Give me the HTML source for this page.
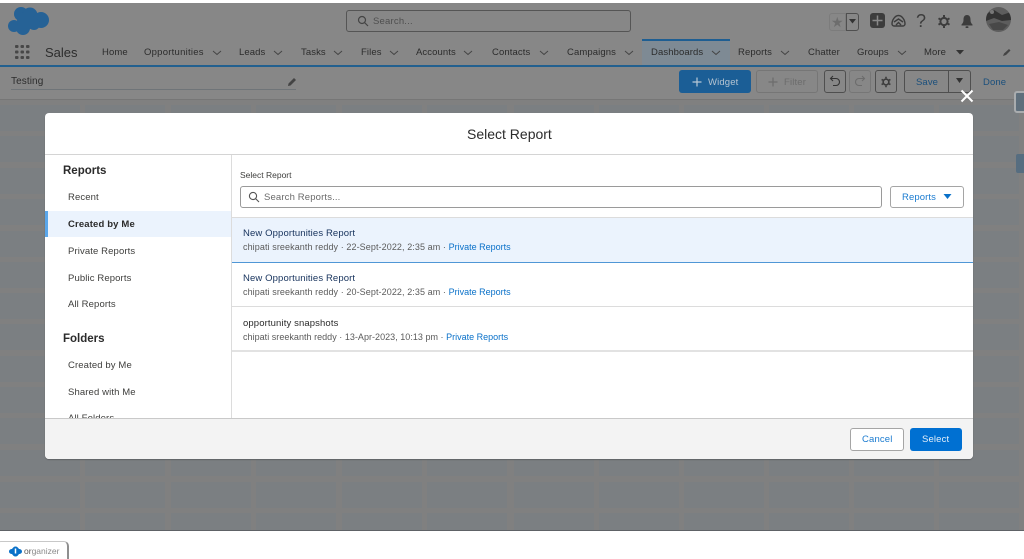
<!DOCTYPE html>
<html><head><meta charset="utf-8"><style>
html,body{margin:0;padding:0}
body{width:1024px;height:559px;overflow:hidden;position:relative;background:#fff;font-family:"Liberation Sans",sans-serif}
#w{position:absolute;left:0;top:0;width:1024px;height:559px;overflow:hidden}
.a{position:absolute;white-space:nowrap;line-height:12px}
.n{font-size:9.5px;color:#2c2c2c;top:47px;letter-spacing:.1px}
.c{position:absolute;background:#7b7f82;width:80px}
.b{position:absolute;box-sizing:border-box;border:1px solid #4f4f4f;border-radius:3px}
.l{font-size:9.5px;color:#3e3e3c;left:68px;letter-spacing:.12px}
.t{font-size:9.5px;color:#16325c;left:243px;letter-spacing:.12px}
.s{font-size:9px;left:243px;color:#5b5b5b;letter-spacing:.09px}
.s b{font-weight:normal;color:#0a71c9;letter-spacing:0}
</style></head><body><div id="w">
<div class="a" style="left:0;top:0;width:1024px;height:3px;background:#fff"></div>
<div class="a" style="left:0;top:3px;width:1024px;height:527px;background:#808080"></div>
<div class="a" style="left:0;top:3px;width:1024px;height:96px;background:#878787"></div>
<div class="a" style="left:0;top:99px;width:1024px;height:1px;background:#767676"></div>
<div id="g"><script>
var x=[0,85,171,256,342,427,514,599,684,769,854,939],y=[105,136,168,199,231,262,293,324,356,387,418,450,482,513],h='';
for(var i=0;i<x.length;i++)for(var j=0;j<y.length;j++){var H=j==y.length-1?17:26;h+='<div class="c" style="left:'+x[i]+'px;top:'+y[j]+'px;height:'+H+'px"></div>';}
document.write(h);
</script></div>
<div class="a" style="left:1019px;top:105px;width:5px;height:425px;background:#808080"></div>
<div class="a" style="left:0;top:530px;width:1024px;height:1px;background:#5e6266"></div>

<svg class="a" style="left:8px;top:6px" width="42" height="30" viewBox="0 0 42 30"><g fill="#266296"><circle cx="6" cy="20" r="6"/><circle cx="13" cy="8" r="7"/><circle cx="22" cy="9" r="7.500"/><circle cx="33" cy="14" r="8"/><circle cx="26" cy="18" r="6"/><circle cx="15" cy="22" r="7"/><circle cx="18" cy="15" r="9"/></g></svg>
<div class="a" style="left:346px;top:10px;width:285px;height:22px;box-sizing:border-box;border:1px solid #555;border-radius:3px"></div>
<svg class="a" style="left:357px;top:15px" width="12" height="12" viewBox="0 0 12 12" fill="none" stroke="#444" stroke-width="1.200"><circle cx="5" cy="5" r="3.500"/><path d="M7.500 7.500L11 11"/></svg>
<div class="a" style="left:373px;top:16px;font-size:9.5px;color:#4f4f4f;letter-spacing:.2px">Search...</div>

<div class="a" style="left:829px;top:13px;width:17px;height:18px;box-sizing:border-box;border:1px solid #7c7c7c;border-radius:3px 0 0 3px"></div>
<div class="a" style="left:846px;top:13px;width:13px;height:18px;box-sizing:border-box;border:1px solid #4f4f4f;border-radius:0 3px 3px 0"></div>
<div class="a" style="left:831px;top:14px;font-size:14px;line-height:16px;color:#6d6d6d">★</div>
<svg class="a" style="left:849px;top:19px" width="7" height="5"><path d="M0 0H7L3.500 4.500Z" fill="#333"/></svg>
<svg class="a" style="left:870px;top:13px" width="15" height="15"><rect width="15" height="15" rx="3" fill="#3c3c3c"/><path d="M7.500 2.500V12.500M2.500 7.500H12.500" stroke="#888" stroke-width="1.500"/></svg>
<svg class="a" style="left:891px;top:14px" width="15" height="14" viewBox="0 0 15 14" fill="none" stroke="#3c3c3c" stroke-width="1.400"><path d="M1 10C1 6 4 1.500 7.500 1.500S14 6 14 10C14 11 13 12 12 12H3C2 12 1 11 1 10Z"/><path d="M3 8L7.500 5L12 8M5 11L7.500 8.500L10 11"/></svg>
<div class="a" style="left:916px;top:12px;font-size:18px;line-height:18px;color:#3c3c3c">?</div>
<svg class="a" style="left:937px;top:14px" width="14" height="15" viewBox="0 0 14 15" fill="none" stroke="#3c3c3c"><circle cx="7" cy="7.500" r="3.600" stroke-width="2"/><path d="M7 1V3M7 12V14M1.500 4.300L3.200 5.300M10.800 9.700L12.500 10.700M1.500 10.700L3.200 9.700M10.800 5.300L12.500 4.300" stroke-width="2"/></svg>
<svg class="a" style="left:960px;top:14px" width="14" height="15" viewBox="0 0 14 15"><path d="M7 1C4.500 1 3.500 3 3.500 5.500C3.500 8 3 9 1.500 10.500V11.500H12.500V10.500C11 9 10.500 8 10.500 5.500C10.500 3 9.500 1 7 1Z" fill="#3c3c3c"/><rect x="5.500" y="12.300" width="3" height="1.700" rx=".8" fill="#3c3c3c"/></svg>
<svg class="a" style="left:986px;top:7px" width="25" height="25"><defs><clipPath id="av"><circle cx="12.500" cy="12.500" r="12.500"/></clipPath></defs><g clip-path="url(#av)"><rect width="25" height="25" fill="#5d5d5d"/><path d="M0 7L8 3L16 8L25 5V13L16 14L8 11L0 14Z" fill="#333"/><path d="M3 17L13 15L22 18L17 23H7Z" fill="#484848"/><circle cx="6" cy="5" r="2" fill="#777"/></g></svg>

<svg class="a" style="left:14px;top:44px" width="17" height="16" fill="#474747"><rect x="1" y="1" width="3.500" height="3" rx="1"/><rect x="6.500" y="1" width="3.500" height="3" rx="1"/><rect x="12" y="1" width="3.500" height="3" rx="1"/><rect x="1" y="6.500" width="3.500" height="3" rx="1"/><rect x="6.500" y="6.500" width="3.500" height="3" rx="1"/><rect x="12" y="6.500" width="3.500" height="3" rx="1"/><rect x="1" y="12" width="3.500" height="3" rx="1"/><rect x="6.500" y="12" width="3.500" height="3" rx="1"/><rect x="12" y="12" width="3.500" height="3" rx="1"/></svg>
<div class="a" style="left:45px;top:45px;font-size:13px;line-height:15px;color:#2d2d2d">Sales</div>
<div class="a" style="left:642px;top:39px;width:88px;height:26px;background:#7e8a94"></div>
<div class="a" style="left:642px;top:39px;width:88px;height:2px;background:#1e5e92"></div>
<div class="a" style="left:0;top:65px;width:1024px;height:2px;background:#22608f"></div>
<div class="a n" style="left:102px">Home</div>
<div class="a n" style="left:144px;letter-spacing:.25px">Opportunities</div>
<div class="a n" style="left:239px">Leads</div>
<div class="a n" style="left:301px">Tasks</div>
<div class="a n" style="left:361px">Files</div>
<div class="a n" style="left:416px">Accounts</div>
<div class="a n" style="left:492px">Contacts</div>
<div class="a n" style="left:567px">Campaigns</div>
<div class="a n" style="left:651px">Dashboards</div>
<div class="a n" style="left:738px">Reports</div>
<div class="a n" style="left:808px">Chatter</div>
<div class="a n" style="left:857px">Groups</div>
<div class="a n" style="left:924px">More</div>
<svg class="a" style="left:0;top:48px" width="1024" height="10" fill="none" stroke="#444" stroke-width="1"><path d="M213 3L217 6.500L221 3M274 3L278 6.500L282 3M334 3L338 6.500L342 3M390 3L394 6.500L398 3M464 3L468 6.500L472 3M540 3L544 6.500L548 3M625 3L629 6.500L633 3M712 3L716 6.500L720 3M781 3L785 6.500L789 3M898 3L902 6.500L906 3"/><path d="M956 2H964L960 6.500Z" fill="#333" stroke="none"/><path d="M1003 8L1004 5.500L1009 1L1010.500 2.500L1006 7Z" fill="#444" stroke="none"/></svg>

<div class="a" style="left:11px;top:76px;font-size:10px;color:#2d2d2d;letter-spacing:.1px">Testing</div>
<div class="a" style="left:11px;top:89px;width:285px;height:1px;background:#6f7478"></div>
<svg class="a" style="left:287px;top:77px" width="10" height="10"><path d="M1 9L1.500 6.500L7 1L9 3L3.500 8.500Z" fill="#444"/></svg>

<div class="a" style="left:679px;top:70px;width:72px;height:23px;background:#1b5e96;border-radius:3px"></div>
<svg class="a" style="left:692px;top:77px" width="10" height="10"><path d="M5 .5V9.500M.5 5H9.500" stroke="#b8c8d6" stroke-width="1.200"/></svg>
<div class="a" style="left:708px;top:77px;font-size:9.500px;color:#b5c4d1;letter-spacing:.15px">Widget</div>
<div class="b" style="left:756px;top:70px;width:62px;height:23px;border-color:#767676"></div>
<svg class="a" style="left:768px;top:77px" width="10" height="10"><path d="M5 .5V9.500M.5 5H9.500" stroke="#6c6c6c" stroke-width="1.200"/></svg>
<div class="a" style="left:784px;top:77px;font-size:9.500px;color:#6c6c6c;letter-spacing:.15px">Filter</div>
<div class="b" style="left:824px;top:70px;width:22px;height:23px"></div>
<svg class="a" style="left:829px;top:75px" width="12" height="13" fill="none" stroke="#333" stroke-width="1.100"><path d="M4 1L1.500 3.500L4 6M1.500 3.500H7C9 3.500 10.500 5 10.500 7S9 10.500 7 10.500H4"/></svg>
<div class="b" style="left:849px;top:70px;width:22px;height:23px;border-color:#767676"></div>
<svg class="a" style="left:854px;top:75px" width="12" height="13" fill="none" stroke="#6c6c6c" stroke-width="1.100"><path d="M8 1L10.500 3.500L8 6M10.500 3.500H5C3 3.500 1.500 5 1.500 7S3 10.500 5 10.500H8"/></svg>
<div class="b" style="left:875px;top:70px;width:22px;height:23px"></div>
<svg class="a" style="left:880px;top:76px" width="12" height="12" viewBox="0 0 14 15" fill="none" stroke="#3c3c3c"><circle cx="7" cy="7.500" r="3.600" stroke-width="2"/><path d="M7 1V3M7 12V14M1.500 4.300L3.200 5.300M10.800 9.700L12.500 10.700M1.500 10.700L3.200 9.700M10.800 5.300L12.500 4.300" stroke-width="2"/></svg>
<div class="b" style="left:904px;top:70px;width:45px;height:23px;border-radius:3px 0 0 3px"></div>
<div class="b" style="left:948px;top:70px;width:23px;height:23px;border-radius:0 3px 3px 0"></div>
<div class="a" style="left:916px;top:77px;font-size:9.500px;color:#1a4f7c;letter-spacing:.1px">Save</div>
<svg class="a" style="left:955px;top:78px" width="9" height="6"><path d="M1 0H8L4.500 5Z" fill="#333"/></svg>
<div class="a" style="left:983px;top:77px;font-size:9.500px;color:#1a4f7c;letter-spacing:.1px">Done</div>

<svg class="a" style="left:960px;top:89px" width="14" height="14"><path d="M1.500 1.500L12.500 12.500M12.500 1.500L1.500 12.500" stroke="#fff" stroke-width="2"/></svg>
<div class="a" style="left:1014px;top:91px;width:14px;height:22px;box-sizing:border-box;background:#5f6f7c;border:2px solid #a9acae;border-radius:3px"></div>
<div class="a" style="left:1016px;top:154px;width:10px;height:19px;background:#566d80;border-radius:2px"></div>

<div class="a" style="left:45px;top:113px;width:928px;height:346px;background:#fff;border-radius:4px;overflow:hidden;box-shadow:0 1px 1px #5f6265">
  <div class="a" style="left:0;top:41px;width:928px;height:1px;background:#d4d4d4"></div>
  <div class="a" style="left:186px;top:42px;width:1px;height:263px;background:#dcdcdc"></div>
  <div class="a" style="left:0;top:98px;width:186px;height:26px;background:#ebf3fd"></div>
  <div class="a" style="left:0;top:98px;width:3px;height:26px;background:#5aa6ea"></div>
  <div class="a" style="left:187px;top:104px;width:741px;height:1px;background:#dcdcdc"></div>
  <div class="a" style="left:187px;top:105px;width:741px;height:44px;background:#ebf3fd"></div>
  <div class="a" style="left:187px;top:149px;width:741px;height:1px;background:#4f97d6"></div>
  <div class="a" style="left:187px;top:193px;width:741px;height:1px;background:#dcdcdc"></div>
  <div class="a" style="left:187px;top:237px;width:741px;height:2px;background:#e2e2e2"></div>
  <div class="a" style="left:0;top:305px;width:928px;height:41px;background:#f3f3f3;border-top:1px solid #c9c9c9;box-sizing:border-box"></div>
</div>
<div class="a" style="left:467px;top:126px;font-size:14px;line-height:16px;color:#2b2b2b">Select Report</div>
<div class="a" style="left:63px;top:165px;font-size:11.500px;font-weight:bold;color:#2b2b2b">Reports</div>
<div class="a l" style="top:192px">Recent</div>
<div class="a l" style="top:219px;font-weight:bold;color:#2b2b2b;letter-spacing:.15px">Created by Me</div>
<div class="a l" style="top:246px">Private Reports</div>
<div class="a l" style="top:273px">Public Reports</div>
<div class="a l" style="top:299px">All Reports</div>
<div class="a" style="left:63px;top:333px;font-size:11.500px;font-weight:bold;color:#2b2b2b">Folders</div>
<div class="a l" style="top:360px">Created by Me</div>
<div class="a l" style="top:387px">Shared with Me</div>
<div class="a" style="left:68px;top:413px;height:5px;overflow:hidden;font-size:9.500px;line-height:12px;color:#3e3e3c;letter-spacing:.12px">All Folders</div>

<div class="a" style="left:240px;top:169px;font-size:8.500px;color:#3e3e3c">Select Report</div>
<div class="a" style="left:240px;top:186px;width:642px;height:22px;box-sizing:border-box;border:1px solid #9a9a9a;border-radius:3px;background:#fff"></div>
<svg class="a" style="left:248px;top:191px" width="12" height="12" fill="none" stroke="#555" stroke-width="1.100"><circle cx="5" cy="5" r="3.600"/><path d="M7.600 7.600L11 11"/></svg>
<div class="a" style="left:264px;top:192px;font-size:9.500px;color:#6b6b6b;letter-spacing:.15px">Search Reports...</div>
<div class="a" style="left:890px;top:186px;width:74px;height:22px;box-sizing:border-box;border:1px solid #a5a5a5;border-radius:3px;background:#fff"></div>
<div class="a" style="left:902px;top:192px;font-size:9.500px;color:#1a7bd0;letter-spacing:.1px">Reports</div>
<svg class="a" style="left:943px;top:194px" width="9" height="6"><path d="M.5 0H8.500L4.500 5Z" fill="#0a71c9"/></svg>

<div class="a t" style="top:228px">New Opportunities Report</div>
<div class="a s" style="top:241px">chipati sreekanth reddy · 22-Sept-2022, 2:35 am · <b>Private Reports</b></div>
<div class="a t" style="top:273px">New Opportunities Report</div>
<div class="a s" style="top:286px">chipati sreekanth reddy · 20-Sept-2022, 2:35 am · <b>Private Reports</b></div>
<div class="a t" style="top:318px;color:#2b2b2b">opportunity snapshots</div>
<div class="a s" style="top:331px;letter-spacing:.03px">chipati sreekanth reddy · 13-Apr-2023, 10:13 pm · <b>Private Reports</b></div>

<div class="a" style="left:850px;top:428px;width:54px;height:23px;box-sizing:border-box;background:#fff;border:1px solid #a5a5a5;border-radius:3px"></div>
<div class="a" style="left:862px;top:434px;font-size:9.500px;color:#1a7bd0;letter-spacing:.15px">Cancel</div>
<div class="a" style="left:910px;top:428px;width:52px;height:23px;background:#0070d2;border-radius:3px"></div>
<div class="a" style="left:922px;top:434px;font-size:9.500px;color:#e4effa;letter-spacing:.15px">Select</div>

<div class="a" style="left:-4px;top:541px;width:73px;height:24px;box-sizing:border-box;background:#fff;border:1px solid #c8c8c8;border-right:2px solid #8f8f8f;border-radius:5px"></div>
<svg class="a" style="left:8px;top:545px" width="15" height="13"><path d="M1 6.500C1 4.500 3 4 4 4C5 2.500 6 1.500 7.500 1.500S10 2.500 11 4C12 4 14 4.500 14 6.500S12 9 11 9C10 10.500 9 11.500 7.500 11.500S5 10.500 4 9C3 9 1 8.500 1 6.500Z" fill="#0a71c9"/><path d="M7.500 3.500V8.500" stroke="#fff" stroke-width="1.500"/></svg>
<div class="a" style="left:24px;top:545px;font-size:8.500px;color:#8a8a8a"><span style="color:#555">or</span>ganizer</div>
</div></body></html>
